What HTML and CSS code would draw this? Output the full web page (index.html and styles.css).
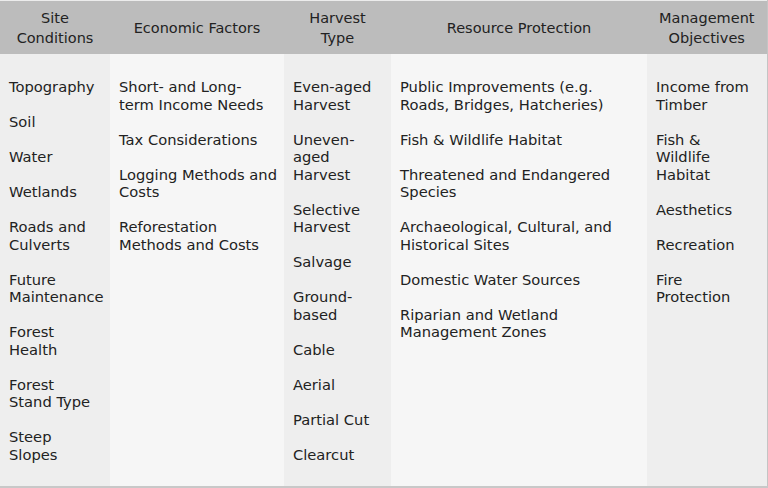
FILE: index.html
```html
<!DOCTYPE html>
<html>
<head>
<meta charset="utf-8">
<link rel="stylesheet" href="styles.css">
</head>
<body>
<table class="grid">
  <colgroup>
    <col class="c1"><col class="c2"><col class="c3"><col class="c4"><col class="c5">
  </colgroup>
  <thead>
    <tr>
      <th>Site<br>Conditions</th>
      <th>Economic Factors</th>
      <th>Harvest<br>Type</th>
      <th>Resource Protection</th>
      <th>Management<br>Objectives</th>
    </tr>
  </thead>
  <tbody>
    <tr>
      <td class="dark">
        <div class="item">Topography</div>
        <div class="item">Soil</div>
        <div class="item">Water</div>
        <div class="item">Wetlands</div>
        <div class="item">Roads and<br>Culverts</div>
        <div class="item">Future<br>Maintenance</div>
        <div class="item">Forest<br>Health</div>
        <div class="item">Forest<br>Stand Type</div>
        <div class="item">Steep<br>Slopes</div>
      </td>
      <td class="light">
        <div class="item">Short- and Long-<br>term Income Needs</div>
        <div class="item">Tax Considerations</div>
        <div class="item">Logging Methods and<br>Costs</div>
        <div class="item">Reforestation<br>Methods and Costs</div>
      </td>
      <td class="dark">
        <div class="item">Even-aged<br>Harvest</div>
        <div class="item">Uneven-<br>aged<br>Harvest</div>
        <div class="item">Selective<br>Harvest</div>
        <div class="item">Salvage</div>
        <div class="item">Ground-<br>based</div>
        <div class="item">Cable</div>
        <div class="item">Aerial</div>
        <div class="item">Partial Cut</div>
        <div class="item">Clearcut</div>
      </td>
      <td class="light">
        <div class="item">Public Improvements (e.g.<br>Roads, Bridges, Hatcheries)</div>
        <div class="item">Fish &amp; Wildlife Habitat</div>
        <div class="item">Threatened and Endangered<br>Species</div>
        <div class="item">Archaeological, Cultural, and<br>Historical Sites</div>
        <div class="item">Domestic Water Sources</div>
        <div class="item">Riparian and Wetland<br>Management Zones</div>
      </td>
      <td class="dark">
        <div class="item">Income from<br>Timber</div>
        <div class="item">Fish &amp;<br>Wildlife<br>Habitat</div>
        <div class="item">Aesthetics</div>
        <div class="item">Recreation</div>
        <div class="item">Fire<br>Protection</div>
      </td>
    </tr>
  </tbody>
</table>
</body>
</html>
```

FILE: styles.css
```css
html, body {
  margin: 0;
  padding: 0;
  background: #ffffff;
}

.grid {
  border-collapse: collapse;
  table-layout: fixed;
  width: 767px;
  height: 488px;
  font-family: "DejaVu Sans", Verdana, sans-serif;
  color: #222222;
  border-top: 1px solid #ececec;
  border-right: 1px solid #c4c4c4;
  border-bottom: 2px solid #c8c8c8;
}

.c1 { width: 110px; }
.c2 { width: 174px; }
.c3 { width: 107px; }
.c4 { width: 256px; }
.c5 { width: 120px; }

.grid th {
  background: #bcbcbc;
  height: 53px;
  padding: 0 4px;
  font-weight: normal;
  font-size: 14.5px;
  line-height: 20px;
  text-align: center;
  vertical-align: middle;
}

.grid td {
  vertical-align: top;
  padding: 24px 9px 0 9px;
  font-size: 14.7px;
  line-height: 17.5px;
}

.dark { background: #eeeeee; }
.light { background: #f6f6f6; }

.item {
  margin-bottom: 17.5px;
  white-space: nowrap;
}
```
